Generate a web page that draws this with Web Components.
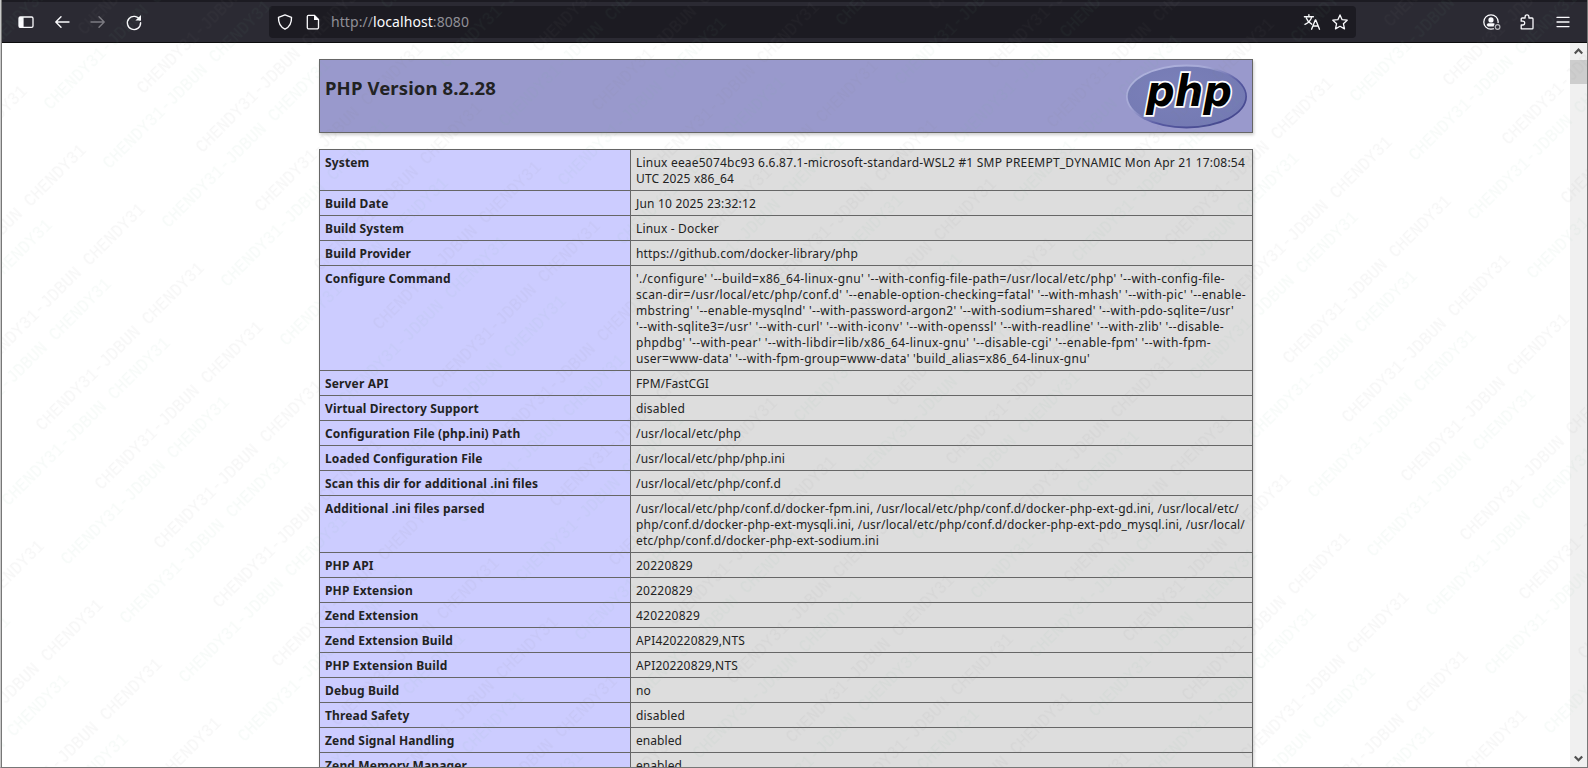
<!DOCTYPE html>
<html lang="en">
<head>
<meta charset="utf-8">
<title>PHP 8.2.28 - phpinfo()</title>
<style>
  body {
    margin: 0;
    width: 1588px;
    height: 768px;
    overflow: hidden;
    background: #fff;
    color: #222;
    font-family: "Noto Sans", sans-serif;
  }
</style>
</head>
<body>
<browser-window>
  <browser-toolbar slot="toolbar"></browser-toolbar>
  <php-info>
    <php-header slot="header">PHP Version 8.2.28</php-header>
    <info-row label="System"><text-line w="609">Linux eeae5074bc93 6.6.87.1-microsoft-standard-WSL2 #1 SMP PREEMPT_DYNAMIC Mon Apr 21 17:08:54</text-line><text-line w="98">UTC 2025 x86_64</text-line></info-row>
    <info-row label="Build Date"><text-line w="120">Jun 10 2025 23:32:12</text-line></info-row>
    <info-row label="Build System"><text-line w="83">Linux - Docker</text-line></info-row>
    <info-row label="Build Provider"><text-line w="222">https://github.com/docker-library/php</text-line></info-row>
    <info-row label="Configure Command"><text-line w="589">'./configure' '--build=x86_64-linux-gnu' '--with-config-file-path=/usr/local/etc/php' '--with-config-file-</text-line><text-line w="610">scan-dir=/usr/local/etc/php/conf.d' '--enable-option-checking=fatal' '--with-mhash' '--with-pic' '--enable-</text-line><text-line w="598">mbstring' '--enable-mysqlnd' '--with-password-argon2' '--with-sodium=shared' '--with-pdo-sqlite=/usr'</text-line><text-line w="588">'--with-sqlite3=/usr' '--with-curl' '--with-iconv' '--with-openssl' '--with-readline' '--with-zlib' '--disable-</text-line><text-line w="575">phpdbg' '--with-pear' '--with-libdir=lib/x86_64-linux-gnu' '--disable-cgi' '--enable-fpm' '--with-fpm-</text-line><text-line w="454">user=www-data' '--with-fpm-group=www-data' 'build_alias=x86_64-linux-gnu'</text-line></info-row>
    <info-row label="Server API"><text-line w="73">FPM/FastCGI</text-line></info-row>
    <info-row label="Virtual Directory Support"><text-line w="49">disabled</text-line></info-row>
    <info-row label="Configuration File (php.ini) Path"><text-line w="105">/usr/local/etc/php</text-line></info-row>
    <info-row label="Loaded Configuration File"><text-line w="149">/usr/local/etc/php/php.ini</text-line></info-row>
    <info-row label="Scan this dir for additional .ini files"><text-line w="145">/usr/local/etc/php/conf.d</text-line></info-row>
    <info-row label="Additional .ini files parsed"><text-line w="603">/usr/local/etc/php/conf.d/docker-fpm.ini, /usr/local/etc/php/conf.d/docker-php-ext-gd.ini, /usr/local/etc/</text-line><text-line w="609">php/conf.d/docker-php-ext-mysqli.ini, /usr/local/etc/php/conf.d/docker-php-ext-pdo_mysql.ini, /usr/local/</text-line><text-line w="243">etc/php/conf.d/docker-php-ext-sodium.ini</text-line></info-row>
    <info-row label="PHP API"><text-line w="57">20220829</text-line></info-row>
    <info-row label="PHP Extension"><text-line w="57">20220829</text-line></info-row>
    <info-row label="Zend Extension"><text-line w="64">420220829</text-line></info-row>
    <info-row label="Zend Extension Build"><text-line w="109">API420220829,NTS</text-line></info-row>
    <info-row label="PHP Extension Build"><text-line w="102">API20220829,NTS</text-line></info-row>
    <info-row label="Debug Build"><text-line w="15">no</text-line></info-row>
    <info-row label="Thread Safety"><text-line w="49">disabled</text-line></info-row>
    <info-row label="Zend Signal Handling"><text-line w="46">enabled</text-line></info-row>
    <info-row label="Zend Memory Manager"><text-line w="46">enabled</text-line></info-row>
  </php-info>
  <scroll-bar slot="scrollbar"></scroll-bar>
</browser-window>

<script>
const define = (name, html, setup) => {
  const template = document.createElement("template");
  template.innerHTML = html;
  customElements.define(name, class extends HTMLElement {
    connectedCallback() {
      if (this.shadowRoot) return;
      this.attachShadow({ mode: "open" }).append(template.content.cloneNode(true));
      if (setup) setup(this, this.shadowRoot);
    }
  });
};

// Spreads the characters so the line takes exactly `width` pixels
const fit = (el, width) => {
  const natural = el.getBoundingClientRect().width;
  const spacing = (width - natural) / el.textContent.length;
  el.style.letterSpacing = `${spacing.toFixed(4)}px`;
};

const ICONS = {
  sidebar: `<rect x="1" y="3" width="14" height="10.4" rx="1.4" stroke-width="1.3"/><path d="M1 3h4.6v10.4H1z" fill="currentColor" stroke="none"/>`,
  back: `<path d="M15 8H2M7 2.8 1.8 8 7 13.2" stroke-width="1.4"/>`,
  forward: `<path d="M1 8h13M9 2.8 14.2 8 9 13.2" stroke-width="1.4"/>`,
  reload: `<path d="M13.9 6A6.6 6.6 0 1 0 14.6 8.8" stroke-width="1.4"/><path d="M15 1v5.6H9.4z" fill="currentColor" stroke="none"/>`,
  shield: `<path d="M8 .9 14.5 3.4C14.7 8.6 12.6 13 8 15.2 3.4 13 1.3 8.6 1.5 3.4z" stroke-width="1.4"/>`,
  page: `<path d="M3.5 1.3h5.8l4.2 4.2v8a1.4 1.4 0 0 1-1.4 1.4H3.7a1.4 1.4 0 0 1-1.4-1.4V2.6a1.3 1.3 0 0 1 1.2-1.3z" stroke-width="1.3"/><path d="M9 1v5h5z" fill="currentColor" stroke="none"/>`,
  translate: `<path d="M.4 2.7h9M4.9.6v2M7.8 2.7C7 6 4.3 9 1 10.4M2.4 4.2c1 2.8 3 4.8 5.3 6M7.6 15.2l3.7-9.3h.5l3.7 9.3M9 12h5" stroke-width="1.35"/>`,
  star: `<path d="m8 .9 2.1 4.8 5.1.5-3.8 3.5 1.1 5.2L8 12.3l-4.5 2.6 1.1-5.2L.8 6.2l5.1-.5z" stroke-width="1.3"/>`,
  account: `<circle cx="8" cy="8" r="7.2" stroke-width="1.3"/><circle cx="8" cy="5.9" r="2.6" fill="currentColor" stroke="none"/><path d="M3.6 11c.4-1.5 1.5-1.8 2.7-1.8h3.4c1.2 0 2.1.3 2.5 1.4L11 12.6H5z" fill="currentColor" stroke="none"/><circle cx="14.6" cy="13" r="3.9" fill="#2b2a33" stroke="none"/><circle cx="14.6" cy="13" r="2.3" stroke="#b9b9bd" stroke-width="1.2"/>`,
  extension: `<path d="M2.2 14.8V11h1.6a1.9 1.9 0 0 0 0-3.8H2.2V4.9a.9.9 0 0 1 .9-.9h3V2.8a1.9 1.9 0 0 1 3.8 0V4h3.2a.9.9 0 0 1 .9.9v9a.9.9 0 0 1-.9.9z" stroke-width="1.3"/>`,
  menu: `<path d="M2 3.4h12M2 8h12M2 12.6h12" stroke-width="1.3"/>`
};

define("tool-icon", `
  <style>
    :host { display: block; width: 16px; height: 16px; color: #fbfbfe; }
    :host([dim]) { color: #7c7b82; }
    svg { display: block; width: 16px; height: 16px; overflow: visible; fill: none; stroke: currentColor; stroke-linecap: round; stroke-linejoin: round; }
  </style>
  <svg viewBox="0 0 16 16"></svg>`,
  (host, root) => {
    root.querySelector("svg").innerHTML = ICONS[host.getAttribute("name")];
  });

define("url-text", `
  <style>
    :host { display: block; font-size: 14px; line-height: 20px; color: #8f8f96; white-space: nowrap; }
    b { font-weight: 400; color: #fbfbfe; }
  </style>
  <span>http://<b>localhost</b>:8080</span>`,
  (host, root) => fit(root.querySelector("span"), 138));

define("browser-toolbar", `
  <style>
    :host {
      display: flex;
      align-items: center;
      box-sizing: border-box;
      height: 43px;
      background: #2b2a33;
      border-top: 2px solid #1c1b22;
      border-bottom: 1px solid #0c0c0d;
    }
    .nav, .actions { display: flex; gap: 20px; }
    .nav { padding-left: 16px; width: 251px; }
    .address {
      display: flex;
      align-items: center;
      box-sizing: border-box;
      width: 1087px;
      height: 32px;
      padding: 0 8px;
      border-radius: 4px;
      background: #1c1b22;
    }
    .address tool-icon + tool-icon { margin-left: 12px; }
    url-text { flex: 1; margin-left: 10px; }
    .actions { margin-left: 127px; }
  </style>
  <div class="nav">
    <tool-icon name="sidebar"></tool-icon>
    <tool-icon name="back"></tool-icon>
    <tool-icon name="forward" dim></tool-icon>
    <tool-icon name="reload"></tool-icon>
  </div>
  <div class="address">
    <tool-icon name="shield"></tool-icon>
    <tool-icon name="page"></tool-icon>
    <url-text></url-text>
    <tool-icon name="translate"></tool-icon>
    <tool-icon name="star"></tool-icon>
  </div>
  <div class="actions">
    <tool-icon name="account"></tool-icon>
    <tool-icon name="extension"></tool-icon>
    <tool-icon name="menu"></tool-icon>
  </div>`);

define("scroll-bar", `
  <style>
    :host { display: flex; flex-direction: column; width: 17px; background: #f0f0f0; }
    svg { display: block; width: 17px; height: 17px; fill: none; stroke: #505050; stroke-width: 2.2; }
    .thumb { height: 24px; background: #cdcdcd; }
    .track { flex: 1; }
  </style>
  <svg viewBox="0 0 17 17"><path d="m4.8 10.4 3.7-3.8 3.7 3.8"/></svg>
  <div class="thumb"></div>
  <div class="track"></div>
  <svg viewBox="0 0 17 17"><path d="m4.8 6.4 3.7 3.8 3.7-3.8"/></svg>`);

define("php-logo", `
  <style>
    :host { display: block; margin-right: 1px; }
    svg { display: block; }
    text {
      font: italic bold 43px "DejaVu Sans", sans-serif;
      fill: #000;
      stroke: #fff;
      stroke-width: 3.6px;
      stroke-linejoin: miter;
      paint-order: stroke;
    }
  </style>
  <svg width="121" height="65" viewBox="0 0 121 65">
    <defs>
      <linearGradient id="rim" x1="0" y1="0" x2="1" y2="1">
        <stop offset="0" stop-color="#b4b7e0"/>
        <stop offset=".35" stop-color="#a6a9d6"/>
        <stop offset=".6" stop-color="#5558a0"/>
        <stop offset="1" stop-color="#3d3f85"/>
      </linearGradient>
      <radialGradient id="face" cx=".4" cy=".4" r=".65">
        <stop offset="0" stop-color="#7b80b9"/>
        <stop offset="1" stop-color="#747ab3"/>
      </radialGradient>
    </defs>
    <ellipse cx="60.5" cy="32.5" rx="60.5" ry="32" fill="url(#rim)"/>
    <ellipse cx="60.5" cy="32.5" rx="58.8" ry="30" fill="url(#face)"/>
    <text x="20" y="42" textLength="86" lengthAdjust="spacingAndGlyphs">php</text>
  </svg>`);

define("php-header", `
  <style>
    :host {
      display: flex;
      justify-content: space-between;
      box-sizing: border-box;
      height: 74px;
      padding: 4px 4px 4px 5px;
      border: 1px solid #666;
      background: #99c;
      box-shadow: 1px 2px 3px rgba(0, 0, 0, .2);
    }
    h1 { margin: 12px 0 0; font-size: 18.5px; letter-spacing: .12px; line-height: 24px; font-weight: 700; white-space: nowrap; }
  </style>
  <h1><slot></slot></h1>
  <php-logo></php-logo>`);

define("info-row", `
  <style>
    :host {
      display: grid;
      grid-template-columns: 311px 1fr;
      border: 1px solid #666;
      margin-top: -1px;
      font-size: 12px;
      line-height: 16px;
    }
    .e, .v { padding: 5px 5px 3px; }
    .e { background: #ccf; font-weight: 700; letter-spacing: .15px; border-right: 1px solid #666; }
    .v { background: #ddd; }
  </style>
  <div class="e"></div>
  <div class="v"><slot></slot></div>`,
  (host, root) => {
    root.querySelector(".e").textContent = host.getAttribute("label");
  });

// Defined after info-row, whose font size it is measured with
define("text-line", `
  <style>
    :host { display: block; width: max-content; white-space: nowrap; line-height: 16px; }
  </style>
  <slot></slot>`,
  (host) => fit(host, Number(host.getAttribute("w"))));

define("php-info", `
  <style>
    :host { display: block; width: 934px; margin: 16px auto 0; }
    .table { margin-top: 17px; box-shadow: 1px 2px 3px rgba(0, 0, 0, .2); }
  </style>
  <slot name="header"></slot>
  <div class="table"><slot></slot></div>`);

// Faint diagonal lettering tiled over the whole window
define("water-mark", `
  <style>
    :host { position: absolute; inset: 0; pointer-events: none; }
    svg { display: block; width: 100%; height: 100%; }
    text { font: 19px "Liberation Mono", monospace; white-space: pre; }
  </style>
  <svg>
    <defs>
      <pattern id="tile" width="309.7" height="83.44" patternUnits="userSpaceOnUse" patternTransform="translate(26 419) rotate(-45)">
        <text x="2" y="20" textLength="230" lengthAdjust="spacingAndGlyphs" fill="rgba(118,118,118,.065)">CHENDY31-JDBUN CHENDY31</text>
      </pattern>
      <pattern id="tint" width="309.7" height="83.44" patternUnits="userSpaceOnUse" patternTransform="translate(93 157) rotate(-45)">
        <text x="2" y="20" textLength="230" lengthAdjust="spacingAndGlyphs" fill="rgba(110,170,130,.06)">CHENDY31-JDBUN CHENDY31</text>
      </pattern>
    </defs>
    <rect width="100%" height="100%" fill="url(#tile)"/>
    <rect width="100%" height="100%" fill="url(#tint)"/>
  </svg>`);

define("browser-window", `
  <style>
    :host {
      display: flex;
      flex-direction: column;
      position: relative;
      box-sizing: border-box;
      width: 1588px;
      height: 768px;
      overflow: hidden;
      border-left: 1px solid #c8c8c8;
      border-right: 1px solid #777;
      border-bottom: 1px solid #777;
    }
    .frame { display: flex; flex-direction: column; flex: 1; min-height: 0; border-left: 1px solid #777; }
    .view { display: flex; flex: 1; min-height: 0; }
    main { flex: 1; overflow: hidden; }
  </style>
  <div class="frame">
    <slot name="toolbar"></slot>
    <div class="view">
      <main><slot></slot></main>
      <slot name="scrollbar"></slot>
    </div>
  </div>
  <water-mark></water-mark>`);
</script>
</body>
</html>
